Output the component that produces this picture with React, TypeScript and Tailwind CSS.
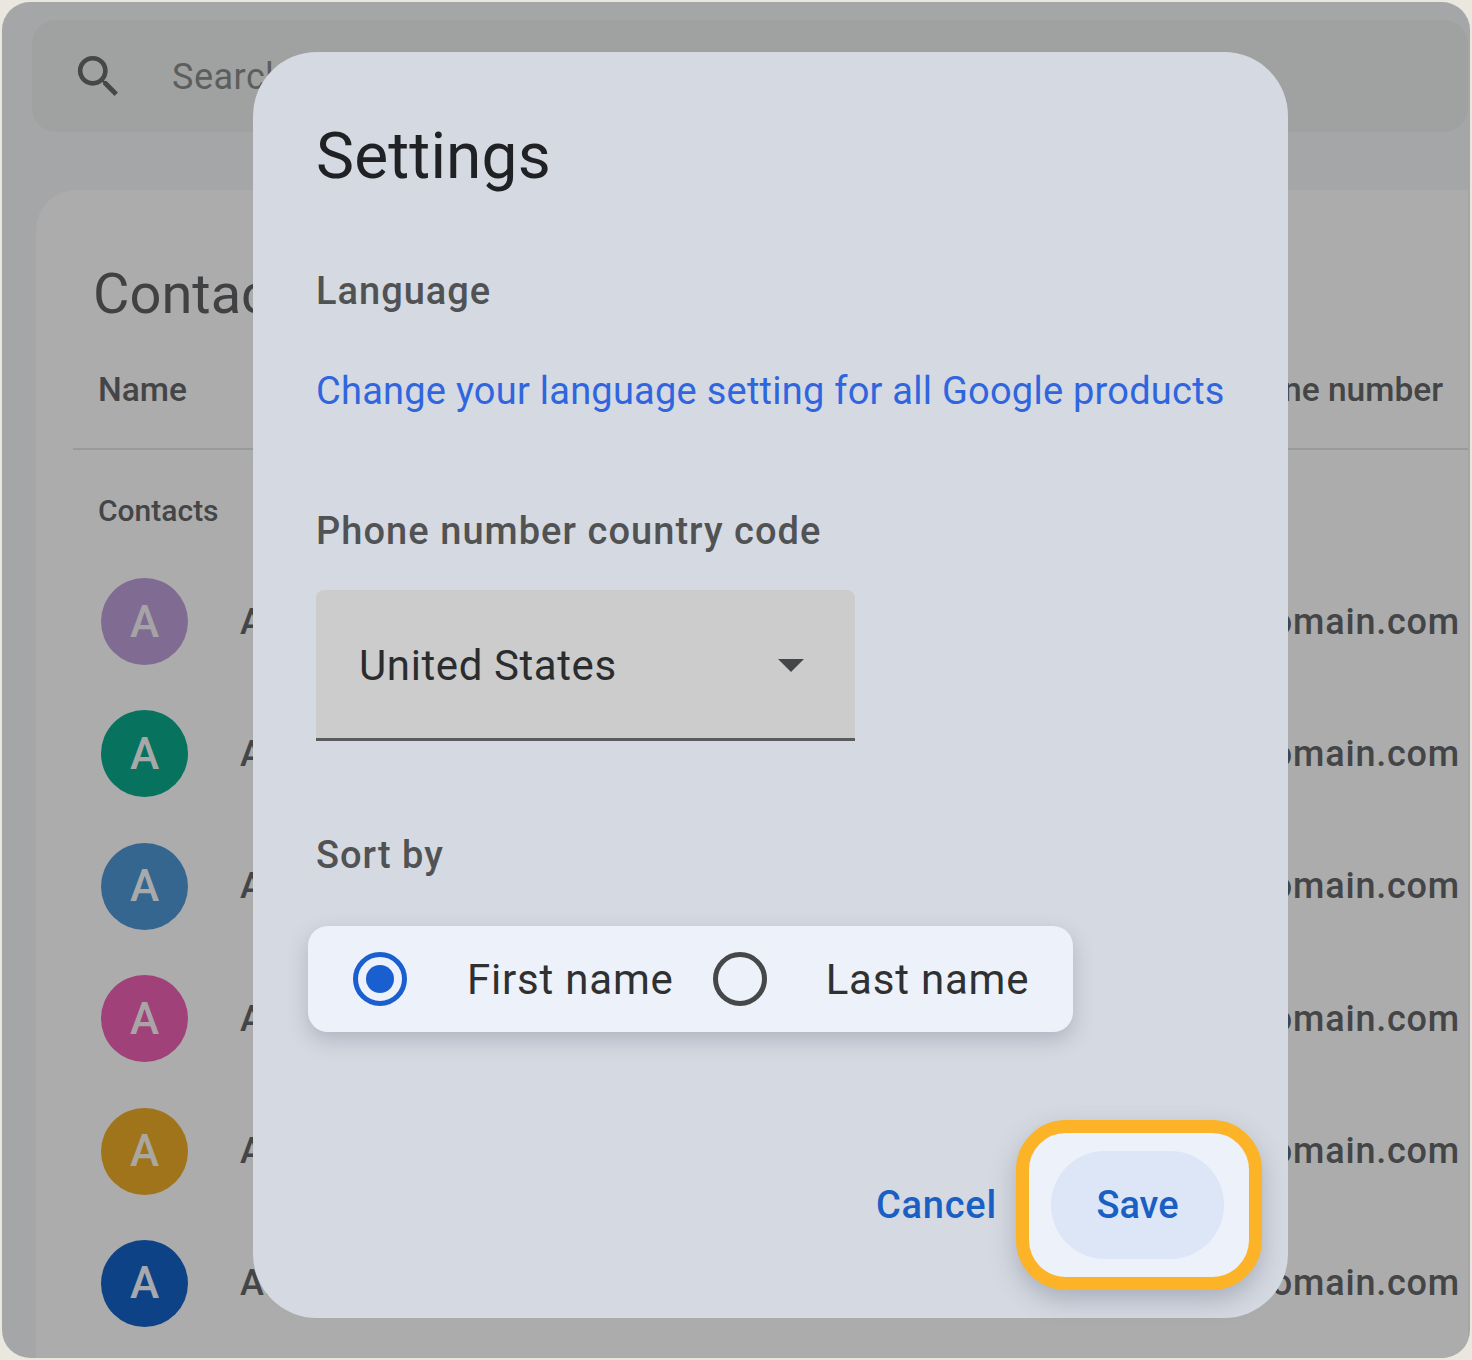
const rows = [
  { color: "bg-[#806b92]", letter: "text-[#a4a4a6]" },
  { color: "bg-[#07735f]", letter: "text-[#a6a9a8]" },
  { color: "bg-[#346690]", letter: "text-[#a8a9ab]" },
  { color: "bg-[#a04279]", letter: "text-[#aaa4a8]" },
  { color: "bg-[#a0741a]", letter: "text-[#aaa7a0]" },
  { color: "bg-[#0e4287]", letter: "text-[#a7a9ac]" },
];

const App = () => (
  <div className="relative w-[1472px] h-[1360px] p-[2px] bg-[#e9e7de] overflow-hidden font-['Roboto',sans-serif]">
    <div className="h-full rounded-[28px] overflow-hidden bg-[#a5a6a7] pt-[18px] pr-[2px] pl-[30px]">
      <div className="h-[112px] rounded-[24px] bg-[#a0a2a1] flex items-center pl-[39px] text-[#5c5e5e]">
        <svg viewBox="0 0 24 24" className="w-[55px] h-[55px] fill-[#454749]">
          <path d="M15.5 14h-.79l-.28-.27A6.471 6.471 0 0 0 16 9.5 6.5 6.5 0 1 0 9.5 16c1.61 0 3.09-.59 4.23-1.57l.27.28v.79l5 4.99L20.49 19l-4.99-5zm-6 0C7.01 14 5 11.99 5 9.5S7.01 5 9.5 5 14 7.01 14 9.5 11.99 14 9.5 14z" />
        </svg>
        <span className="ml-[46px] pt-[2px] text-[36px] tracking-[0.5px]">Search contacts</span>
      </div>

      <div className="mt-[58px] ml-[4px] h-[1200px] rounded-tl-[40px] bg-[#acacac] pt-[70px] text-[#444546]">
        <h2 className="ml-[57px] text-[56px] leading-[68px] text-[#3f4142]">Contacts</h2>
        <div className="ml-[37px] mt-[18px] h-[104px] border-b-2 border-[#999a9a] flex justify-between pl-[25px] pr-[25px] pt-[24px] text-[33.5px] leading-[40px] font-medium">
          <span>Name</span>
          <span>Phone number</span>
        </div>
        <div className="ml-[62px] mt-[43px] text-[30px] leading-[36px] font-medium">Contacts</div>
        <div className="mt-[49px] flex flex-col gap-[45.4px] pl-[65px] pr-[8px]">
          {rows.map((r, i) => (
            <div key={i} className="flex items-center h-[87px] text-[36px] tracking-[0.8px] font-medium">
              <div className={`w-[87px] h-[87px] rounded-full flex items-center justify-center text-[44px] tracking-normal font-medium ${r.color} ${r.letter}`}>A</div>
              <span className="ml-[52px]">Alex Anderson</span>
              <span className="ml-auto">alex.anderson@domain.com</span>
            </div>
          ))}
        </div>
      </div>
    </div>

    <div className="absolute left-[253px] top-[52px] w-[1035px] h-[1266px] rounded-[64px] bg-[#d5d9e1] pl-[63px] pt-[65px] text-[#505254]">
      <h1 className="text-[64px] leading-[80px] tracking-[0.15px] text-[#202124]">Settings</h1>
      <div className="mt-[70px] text-[38px] tracking-[1px] leading-[48px] font-medium">Language</div>
      <a className="block mt-[52px] text-[38px] tracking-[0.24px] leading-[48px] text-[#2f66e0]">Change your language setting for all Google products</a>
      <div className="mt-[92px] text-[38px] tracking-[1.05px] leading-[48px] font-medium">Phone number country code</div>
      <div className="mt-[35px] w-[539px] h-[151px] rounded-t-[8px] bg-[#cccccc] border-b-[3px] border-[#5a5b5c] flex items-center justify-between pl-[43px] pr-[51px] pt-[3px] text-[42px] tracking-[0.6px] text-[#2b2c2e]">
        <span>United States</span>
        <span className="w-0 h-0 border-x-[13.5px] border-x-transparent border-t-[13px] border-t-[#444648]" />
      </div>
      <div className="mt-[90px] text-[38px] tracking-[1px] leading-[48px] font-medium">Sort by</div>
      <div className="mt-[47px] -ml-[8px] w-[765px] h-[106px] rounded-[20px] bg-[#edf1fa] shadow-[0_8px_20px_rgba(90,100,120,0.3)] flex items-center pl-[45px] text-[42px] tracking-[0.8px] text-[#2f3032]">
        <span className="w-[54px] h-[54px] rounded-full border-[5px] border-[#1a5fd0] flex items-center justify-center">
          <span className="w-[28px] h-[28px] rounded-full bg-[#1a5fd0]" />
        </span>
        <span className="ml-[60px]">First name</span>
        <span className="ml-[39px] w-[54px] h-[54px] rounded-full border-[5px] border-[#454749]" />
        <span className="ml-[59px]">Last name</span>
      </div>

      <span className="absolute right-[291px] bottom-[88px] text-[38px] tracking-[0.8px] leading-[50px] font-medium text-[#1a5fc4]">Cancel</span>
      <div className="absolute left-[763px] top-[1068px] w-[246px] h-[170px] rounded-[50px] border-[13px] border-[#fdb327] bg-[#edf1fa] shadow-[0_10px_24px_rgba(90,100,120,0.35)] flex items-center justify-center pr-[3px]">
        <span className="w-[173px] h-[108px] rounded-full bg-[#dde6f7] flex items-center justify-center text-[38px] font-medium text-[#1a5fc4]">Save</span>
      </div>
    </div>
  </div>
);

export default App;
